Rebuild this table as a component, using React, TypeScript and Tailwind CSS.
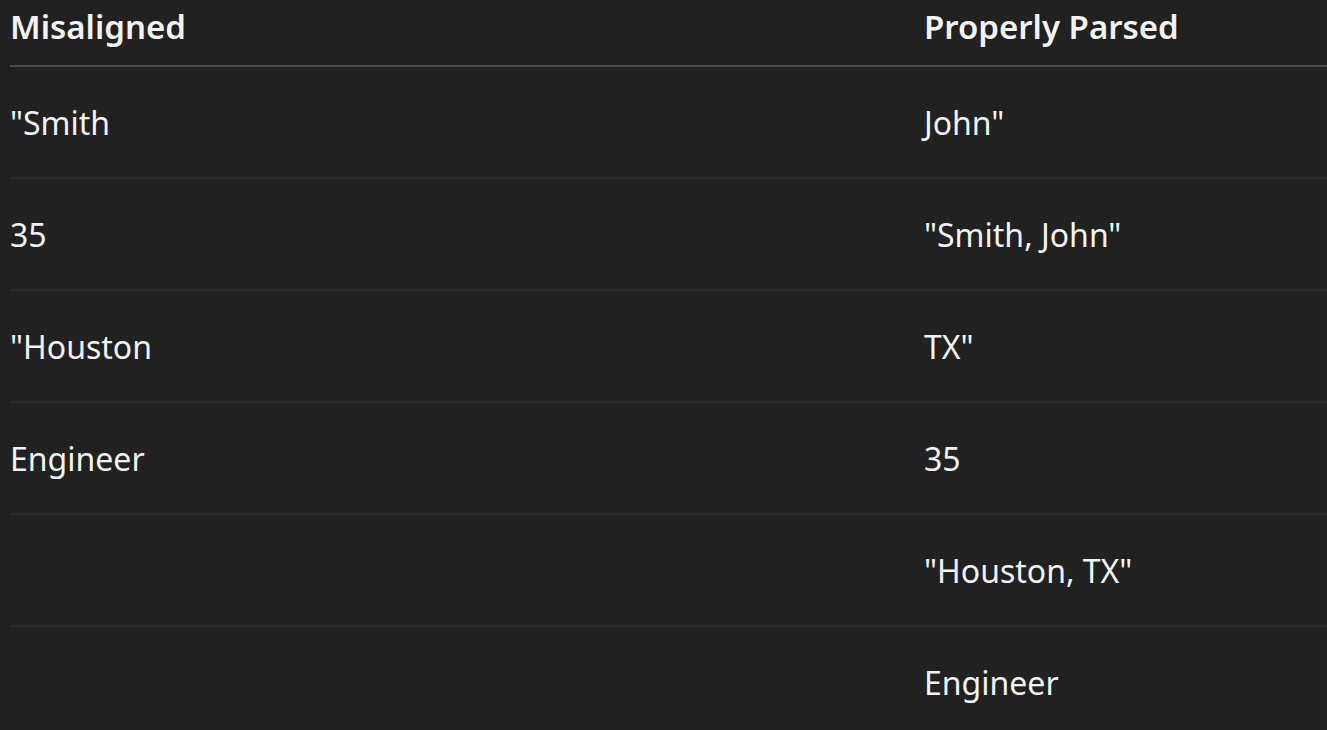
const rows: [string, string][] = [
  ['"Smith', 'John"'],
  ['35', '"Smith, John"'],
  ['"Houston', 'TX"'],
  ['Engineer', '35'],
  ['', '"Houston, TX"'],
  ['', 'Engineer'],
];

export default function App() {
  return (
    <div
      className="h-[730px] w-full overflow-hidden bg-[#212121] pl-[10px] text-[#f3f3f3]"
      style={{ fontFamily: '"Noto Sans", "Open Sans", sans-serif' }}
    >
      {/* Header */}
      <div className="grid h-[67px] grid-cols-[914px_1fr] border-b-2 border-[#4a4a4a] text-[33px] font-semibold leading-[46px]">
        <div className="pt-[4px]">Misaligned</div>
        <div className="pt-[4px]">Properly Parsed</div>
      </div>

      {/* Body */}
      {rows.map(([a, b], i) => (
        <div
          key={i}
          className="grid h-[112px] grid-cols-[914px_1fr] items-center border-b-2 border-[#2b2b2b] text-[32px]"
        >
          <div className="pt-[2px]">{a}</div>
          <div className="pt-[2px]">{b}</div>
        </div>
      ))}
    </div>
  );
}
